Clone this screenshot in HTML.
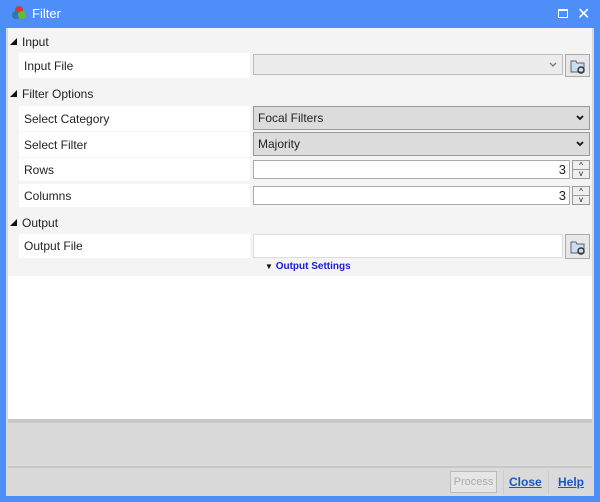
<!DOCTYPE html>
<html><head><style>
*{margin:0;padding:0;box-sizing:border-box}
body{width:600px;height:502px;background:#4d8ef8;font-family:"Liberation Sans",sans-serif;font-size:12px;color:#222;position:relative;overflow:hidden}
.a{position:absolute}
.t{color:#fff;font-size:13px}
.lbl{position:absolute;left:19px;width:231px;background:#fff;padding-left:5px;display:flex;align-items:center}
.hdr{position:absolute;left:10px;display:flex;align-items:center;font-size:12px}
.tri{width:0;height:0;border-left:7px solid transparent;border-bottom:7px solid #111;margin-right:5px}
.box{position:absolute;left:253px;border:1px solid #aaa;background:#fff;display:flex;align-items:center;padding-left:4px}
.combo{background:#dcdcdc;border-color:#999}
.chev{position:absolute;right:5px;top:50%;margin-top:-3px}
.spin{position:absolute;left:572px;width:18px;border:1px solid #999;background:#eee}
.btn{position:absolute;left:565px;width:25px;border:1px solid #aaa;background:#e8e8e8}
</style></head><body>
<div class="a" style="left:0;top:0;width:600px;height:28px"></div>
<svg class="a" style="left:11px;top:5px" width="16" height="16"><circle cx="8" cy="5" r="4" fill="#d33"/><circle cx="5" cy="10" r="4" fill="#37a"/><circle cx="11" cy="10" r="4" fill="#6b3"/></svg>
<div class="a t" style="left:32px;top:6px">Filter</div>
<div class="a" style="left:558px;top:9px;width:10px;height:9px;border:1.5px solid #fff;border-top-width:2.5px"></div>
<div class="a t" style="left:577px;top:4px;font-size:16px">✕</div>
<div class="a" style="left:6px;top:28px;width:588px;height:468px;background:#dadada"></div>
<div class="a" style="left:8px;top:28px;width:584px;height:248px;background:#f4f4f4"></div>
<div class="a" style="left:8px;top:276px;width:584px;height:143px;background:#fff"></div>
<div class="a" style="left:8px;top:419px;width:584px;height:4px;background:#c8c8c8"></div>
<div class="a" style="left:8px;top:466px;width:584px;height:2px;background:#c8c8c8"></div>

<div class="hdr" style="top:34px;height:15px"><div class="tri"></div>Input</div>
<div class="lbl" style="top:53px;height:25px">Input File</div>
<div class="box combo" style="top:54px;width:310px;height:21px;background:#ececec;border-color:#bbb"><svg class="chev" width="8" height="6"><path d="M1 1l3 3 3-3" fill="none" stroke="#777" stroke-width="1.3"/></svg></div>
<div class="btn" style="top:54px;height:23px"><svg width="23" height="21"><path d="M5 6h5l1 2h7v9H5z" fill="#cde" stroke="#567"/><circle cx="15" cy="15" r="3" fill="none" stroke="#333" stroke-width="1.5"/></svg></div>

<div class="hdr" style="top:86px;height:15px"><div class="tri"></div>Filter Options</div>
<div class="lbl" style="top:106px;height:25px">Select Category</div>
<div class="box combo" style="top:106px;width:337px;height:24px">Focal Filters<svg class="chev" width="8" height="6"><path d="M1 1l3 3 3-3" fill="none" stroke="#111" stroke-width="1.8"/></svg></div>
<div class="lbl" style="top:132px;height:25px">Select Filter</div>
<div class="box combo" style="top:132px;width:337px;height:24px">Majority<svg class="chev" width="8" height="6"><path d="M1 1l3 3 3-3" fill="none" stroke="#111" stroke-width="1.8"/></svg></div>
<div class="lbl" style="top:158px;height:23px">Rows</div>
<div class="box" style="top:160px;width:317px;height:19px;justify-content:flex-end;padding-right:3px;font-size:13px">3</div>
<div class="spin" style="top:160px;height:19px"><div style="height:9px;border-bottom:1px solid #999;font-size:8px;text-align:center;line-height:9px">^</div><div style="font-size:8px;text-align:center;line-height:8px">v</div></div>
<div class="lbl" style="top:184px;height:23px">Columns</div>
<div class="box" style="top:186px;width:317px;height:19px;justify-content:flex-end;padding-right:3px;font-size:13px">3</div>
<div class="spin" style="top:186px;height:19px"><div style="height:9px;border-bottom:1px solid #999;font-size:8px;text-align:center;line-height:9px">^</div><div style="font-size:8px;text-align:center;line-height:8px">v</div></div>

<div class="hdr" style="top:215px;height:15px"><div class="tri"></div>Output</div>
<div class="lbl" style="top:234px;height:24px">Output File</div>
<div class="box" style="top:234px;width:310px;height:24px;border-color:#ddd"></div>
<div class="btn" style="top:234px;height:25px"><svg width="23" height="23"><path d="M5 7h5l1 2h7v9H5z" fill="#cde" stroke="#567"/><circle cx="15" cy="16" r="3" fill="none" stroke="#333" stroke-width="1.5"/></svg></div>
<div class="a" style="left:265px;top:261px;font-size:10px;font-weight:bold;color:#1a1adc"><span style="color:#111;font-size:8px">▼</span> Output Settings</div>

<div class="a" style="left:450px;top:471px;width:47px;height:22px;border:1px solid #bbb;background:#e6e6e6;color:#aaa;text-align:center;line-height:20px;font-size:11px">Process</div>
<div class="a" style="left:503px;top:470px;width:1px;height:24px;background:#ccc"></div>
<div class="a" style="left:509px;top:475px;color:#1a56c8;font-weight:bold;text-decoration:underline">Close</div>
<div class="a" style="left:548px;top:470px;width:1px;height:24px;background:#ccc"></div>
<div class="a" style="left:558px;top:475px;color:#1a56c8;font-weight:bold;text-decoration:underline">Help</div>
</body></html>
